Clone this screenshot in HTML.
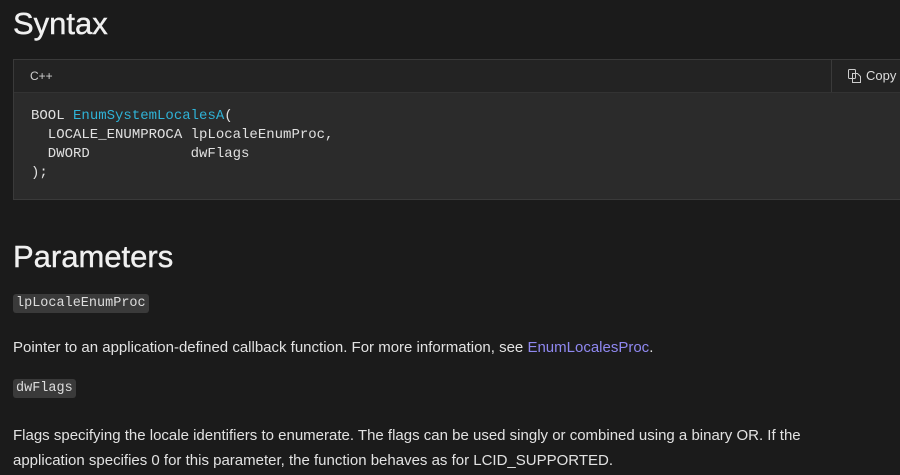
<!DOCTYPE html>
<html><head><style>
body{margin:0;width:900px;height:475px;overflow:hidden;background:#1b1b1b;color:#e6e6e6;font-family:"Liberation Sans",sans-serif;position:relative}
.a{position:absolute;white-space:nowrap}
h1{margin:0;font-weight:normal;font-size:31px;color:#f0f0f0;position:absolute;left:13px;-webkit-text-stroke:0.4px #f0f0f0}
.blk{position:absolute;left:13px;top:59px;width:900px;height:141px;background:#2b2b2b;border:1px solid #3a3a3a;box-sizing:border-box}
.hd{height:32px;background:#232323;border-bottom:1px solid #333;position:relative}
.mono{font-family:"Liberation Mono",monospace}
pre{margin:0;position:absolute;left:17px;top:47px;font-size:14px;line-height:19px;color:#e0e0e0}
.f{color:#2fb2d6}
code{font-family:"Liberation Mono",monospace;background:#3a3a3a;border-radius:3px;padding:2px 3px;font-size:13.5px;color:#ddd}
p{margin:0;font-size:15px;position:absolute;left:13px;color:#e2e2e2}
a{color:#8f88f0;text-decoration:none}
</style></head><body>
<h1 style="top:6px">Syntax</h1>
<div class="blk"><div class="hd">
<span class="a" style="left:16px;top:9px;font-size:12px;color:#cfcfcf">C++</span>
<div style="position:absolute;left:817px;top:0;height:32px;border-left:1px solid #3a3a3a;width:80px">
<svg class="a" style="left:16px;top:9px" width="13" height="14" viewBox="0 0 13 14" fill="none" stroke="#ccc" stroke-width="1"><rect x="0.5" y="0.5" width="7" height="9" rx="1"/><path d="M4.5 4.5h5l3 3v6h-8z"/></svg>
<span class="a" style="left:34px;top:8px;font-size:13px;color:#ddd">Copy</span></div>
</div>
<pre class="mono">BOOL <span class="f">EnumSystemLocalesA</span>(
  LOCALE_ENUMPROCA lpLocaleEnumProc,
  DWORD            dwFlags
);</pre></div>
<h1 style="top:239px">Parameters</h1>
<div class="a" style="left:13px;top:293px"><code>lpLocaleEnumProc</code></div>
<p style="top:339px">Pointer to an application-defined callback function. For more information, see <a>EnumLocalesProc</a>.</p>
<div class="a" style="left:13px;top:378px"><code>dwFlags</code></div>
<p style="top:423px;line-height:25px;width:855px">Flags specifying the locale identifiers to enumerate. The flags can be used singly or combined using a binary OR. If the application specifies 0 for this parameter, the function behaves as for LCID_SUPPORTED.</p>
</body></html>
